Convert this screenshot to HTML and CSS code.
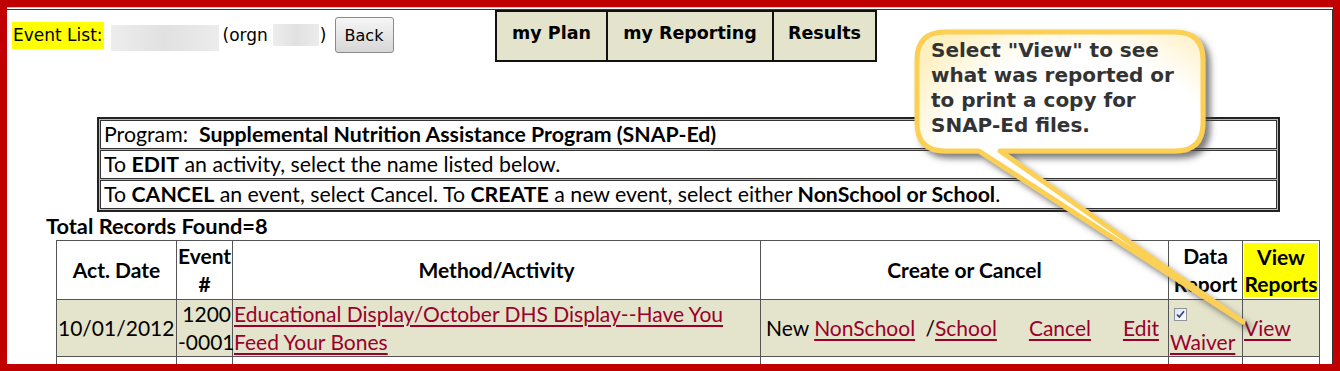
FILE: index.html
```html
<!DOCTYPE html>
<html lang="en">
<head>
    <meta charset="UTF-8">
    <title>Event List</title>
    <link rel="stylesheet" href="styles.css">
</head>
<body>
<div class="frame">
  <div class="page">
    <div class="inner">
      <div class="topbar">
        <div class="event-head">
          <span class="hl">Event List:</span>
          <span class="redact r1"></span>
          <span class="orgn">(orgn</span>
          <span class="redact r2"></span>
          <span class="paren">)</span>
          <button type="button" class="back">Back</button>
        </div>
        <table class="tabs">
          <tr>
            <td class="t1">my Plan</td>
            <td class="t2">my Reporting</td>
            <td class="t3">Results</td>
          </tr>
        </table>
      </div>

      <table class="program">
        <tr><td>Program:&nbsp; <b>Supplemental Nutrition Assistance Program (SNAP-Ed)</b></td></tr>
        <tr><td>To <b>EDIT</b> an activity, select the name listed below.</td></tr>
        <tr><td>To <b>CANCEL</b> an event, select Cancel. To <b>CREATE</b> a new event, select either <b>NonSchool or School</b>.</td></tr>
      </table>

      <div class="total">Total Records Found=8</div>

      <table class="events">
        <colgroup>
          <col style="width:120px">
          <col style="width:56px">
          <col style="width:528px">
          <col style="width:408px">
          <col style="width:74px">
          <col style="width:77px">
        </colgroup>
        <tr class="head">
          <th>Act. Date</th>
          <th>Event #</th>
          <th>Method/Activity</th>
          <th>Create or Cancel</th>
          <th>Data Report</th>
          <th class="view-head"><div class="yellow">View Reports</div></th>
        </tr>
        <tr class="row">
          <td class="date">10/01/2012</td>
          <td class="num">1200<br>-0001</td>
          <td class="method"><a href="#">Educational Display/October DHS Display--Have You Feed Your Bones</a></td>
          <td class="create">New <a href="#">NonSchool</a> <span class="slash">/</span><a href="#">School</a><a href="#" class="gap">Cancel</a><a href="#" class="gap">Edit</a></td>
          <td class="data">
            <svg class="check" width="13" height="13" viewBox="0 0 13 13">
              <defs>
                <linearGradient id="cb" x1="0" y1="0" x2="1" y2="1">
                  <stop offset="0" stop-color="#dfe3ea"/>
                  <stop offset="1" stop-color="#ffffff"/>
                </linearGradient>
              </defs>
              <rect x="0.5" y="0.5" width="12" height="12" fill="url(#cb)" stroke="#8e9299"/>
              <path d="M3 6.5 L5.3 9 L10 3.2" fill="none" stroke="#2a3f8f" stroke-width="1.6"/>
            </svg><br><a href="#">Waiver</a>
          </td>
          <td class="view"><a href="#">View</a></td>
        </tr>
        <tr class="row2">
          <td>&nbsp;<br>&nbsp;</td><td></td><td></td><td></td><td></td><td></td>
        </tr>
      </table>
    </div>
  </div>

  <svg class="callout" width="1326" height="357" viewBox="7 7 1326 357">
    <defs>
      <radialGradient id="glow" cx="0.5" cy="0.5" r="0.62">
        <stop offset="0.7" stop-color="#ffffff"/>
        <stop offset="1" stop-color="#fff0c2"/>
      </radialGradient>
      <filter id="shade" x="-10%" y="-10%" width="130%" height="130%">
        <feDropShadow dx="5" dy="5" stdDeviation="3" flood-color="#444" flood-opacity="0.7"/>
      </filter>
    </defs>
    <path d="M945 32 H1175 Q1203 32 1203 60 V123 Q1203 151 1175 151 H1000 L1243 322 L979 151 H945 Q917 151 917 123 V60 Q917 32 945 32 Z"
          fill="url(#glow)" stroke="#fccf55" stroke-width="5" stroke-linejoin="round" filter="url(#shade)"/>
  </svg>
  <div class="callout-text">Select "View" to see<br>what was reported or<br>to print a copy for<br>SNAP-Ed files.</div>
</div>
</body>
</html>
```

FILE: styles.css
```css
body {
    margin: 0;
    background-color: #fff;
}
.frame {
    position: relative;
    width: 1340px;
    height: 371px;
    box-sizing: border-box;
    border: 7px solid #c00000;
    overflow: hidden;
    background-color: #fff;
}
.page {
    height: 100%;
    box-sizing: border-box;
    border-top: 1px solid #c8c8c8;
    padding-top: 1px;
}
.inner {
    height: 100%;
    box-sizing: border-box;
    border-top: 1px solid #333;
    border-right: 1px solid #333;
    font-family: Lato, "Open Sans", sans-serif;
    font-size: 21px;
    color: #000;
}
.topbar {
    display: flex;
    align-items: flex-start;
}
.event-head {
    display: flex;
    align-items: center;
    width: 483px;
    margin: 7px 0 0 5px;
    font-family: "DejaVu Sans", sans-serif;
    font-size: 17px;
}
.hl {
    background-color: #ffff00;
    line-height: 27px;
    padding: 0 1px;
}
.redact {
    display: inline-block;
    background: linear-gradient(90deg, #ededed, #e1e1e1 50%, #ececec);
}
.r1 {
    width: 108px;
    height: 26px;
    margin: 6px 0 0 7px;
}
.orgn {
    margin-left: 4px;
}
.r2 {
    width: 46px;
    height: 22px;
    margin: 0 0 0 5px;
}
.paren {
    margin-left: 1px;
}
.back {
    margin-left: 8px;
    width: 59px;
    height: 36px;
    padding: 0;
    border: 1px solid #8a8a8a;
    border-radius: 3px;
    background: linear-gradient(#f6f6f6, #e6e6e6 50%, #d6d6d6);
    font-family: "DejaVu Sans", sans-serif;
    font-size: 16px;
    color: #000;
}
.tabs {
    border-collapse: collapse;
    border: 2px solid #111;
    height: 52px;
    table-layout: fixed;
    width: 374px;
}
.tabs td {
    border: 2px solid #111;
    background-color: #e4e4cc;
    font-family: "DejaVu Sans", sans-serif;
    font-weight: bold;
    font-size: 17.5px;
    text-align: center;
    vertical-align: middle;
    padding: 0 0 6px;
}
.t1 { width: 109px; }
.t2 { width: 164px; }
.t3 { width: 101px; }

.program {
    margin: 55px 0 0 90px;
    width: 1183px;
    border: 2px solid #222;
    border-spacing: 1px;
    background-color: #b8b8b8;
}
.program td {
    border: 1px solid #333;
    background-color: #fff;
    padding: 0 3px;
    font-size: 21.3px;
    line-height: 27px;
}
.total {
    margin-left: 39px;
    font-weight: bold;
    font-size: 21.8px;
    line-height: 28px;
}
.events {
    margin-left: 49px;
    width: 1263px;
    table-layout: fixed;
    border-collapse: collapse;
    border: 1px solid #3a3a3a;
}
.events th, .events td {
    border: 1px solid #555;
    padding: 0 1px;
    line-height: 28px;
}
.events th {
    background-color: #fff;
    font-weight: bold;
    text-align: center;
    vertical-align: middle;
}
.events .view-head {
    padding: 2px 1px;
}
.yellow {
    background-color: #ffff00;
    line-height: 27px;
}
.row td {
    background-color: #e4e4cc;
    vertical-align: middle;
}
.row .num {
    text-align: right;
}
.row .method {
    vertical-align: top;
}
.row .create {
    padding-left: 5px;
}
.row .data {
    vertical-align: top;
}
.check {
    margin: 8px 0 0 4px;
    vertical-align: top;
}
.slash {
    margin-left: 5px;
}
.gap {
    margin-left: 32px;
}
.events a {
    color: #99002b;
    text-decoration: underline;
    text-decoration-thickness: 2px;
    text-underline-offset: 3px;
}
.callout {
    position: absolute;
    left: 0;
    top: 0;
    pointer-events: none;
}
.callout-text {
    position: absolute;
    left: 924px;
    top: 31px;
    font-family: "DejaVu Sans", sans-serif;
    font-weight: bold;
    font-size: 20px;
    line-height: 25px;
    color: #333;
    white-space: nowrap;
}
```
